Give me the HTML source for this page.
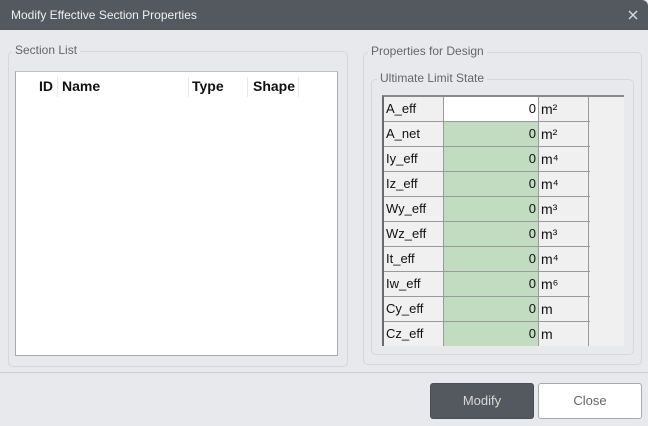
<!DOCTYPE html>
<html><head><style>
*{box-sizing:border-box;margin:0;padding:0}
body{width:648px;height:426px;background:#e8e9ed;font-family:"Liberation Sans",sans-serif;position:relative;overflow:hidden}
.title{position:absolute;left:0;top:0;width:648px;height:30px;background:#545960;color:#f0f0f0;font-size:12px;line-height:30px;padding-left:11px;border-radius:0 6px 0 0}
.x{position:absolute;right:10px;top:10px;width:10px;height:10px}
.grp{position:absolute;border:1px solid #d6d7db;border-radius:5px}
.lbl{position:absolute;background:#e8e9ed;color:#666;font-size:12px;padding:0 3px}
.list{position:absolute;left:15px;top:71px;width:323px;height:285px;background:#fff;border:1px solid #a8a9ad;border-top-color:#c0c0c0}
.h{position:absolute;top:6px;font-size:14px;font-weight:bold;color:#111;height:20px;line-height:16px}
.tbl{position:absolute;left:382px;top:95px;width:242px;height:251px;background:#f0f0f0;border-top:2px solid #8a8a8a;border-left:2px solid #6a6a6a;overflow:hidden}
.row{position:absolute;left:0;height:25px;width:206px;border-bottom:1px solid #9a9a9a;font-size:13px;color:#111}
.row div{position:absolute;top:0;height:24px;line-height:24px}
.c1{left:0;width:60px;padding-left:2px;border-right:1px solid #9a9a9a}
.c2{left:60px;width:95px;background:#c2dcc2;text-align:right;padding-right:2px;border-right:1px solid #9a9a9a}
.c3{left:155px;width:50px;padding-left:2px;border-right:1px solid #9a9a9a;font-size:14px}
.btn{position:absolute;top:383px;height:36px;width:104px;font-size:13px;text-align:center;line-height:34px;border-radius:3px}
</style></head><body>
<div class="title">Modify Effective Section Properties<svg class="x" viewBox="0 0 10 10"><path d="M1 1L9 9M9 1L1 9" stroke="#dcdcdc" stroke-width="1.4"/></svg></div>
<div class="grp" style="left:8px;top:51px;width:340px;height:316px"></div>
<div class="lbl" style="left:12px;top:43px">Section List</div>
<div class="list">
<div class="h" style="left:23px">ID</div>
<div style="position:absolute;left:41px;top:5px;width:1px;height:20px;background:#e8e8e8"></div>
<div class="h" style="left:46px">Name</div>
<div style="position:absolute;left:172px;top:5px;width:1px;height:20px;background:#e8e8e8"></div>
<div class="h" style="left:176px">Type</div>
<div style="position:absolute;left:231px;top:5px;width:1px;height:20px;background:#e8e8e8"></div>
<div class="h" style="left:237px">Shape</div>
<div style="position:absolute;left:282px;top:5px;width:1px;height:20px;background:#e8e8e8"></div>
</div>
<div class="grp" style="left:363px;top:52px;width:279px;height:313px"></div>
<div class="lbl" style="left:368px;top:44px">Properties for Design</div>
<div class="grp" style="left:371px;top:79px;width:263px;height:276px"></div>
<div class="lbl" style="left:377px;top:71px">Ultimate Limit State</div>
<div class="tbl">
<div class="row" style="top:0"><div class="c1">A_eff</div><div class="c2" style="background:#fff">0</div><div class="c3">m²</div></div>
<div class="row" style="top:25px"><div class="c1">A_net</div><div class="c2">0</div><div class="c3">m²</div></div>
<div class="row" style="top:50px"><div class="c1">Iy_eff</div><div class="c2">0</div><div class="c3">m⁴</div></div>
<div class="row" style="top:75px"><div class="c1">Iz_eff</div><div class="c2">0</div><div class="c3">m⁴</div></div>
<div class="row" style="top:100px"><div class="c1">Wy_eff</div><div class="c2">0</div><div class="c3">m³</div></div>
<div class="row" style="top:125px"><div class="c1">Wz_eff</div><div class="c2">0</div><div class="c3">m³</div></div>
<div class="row" style="top:150px"><div class="c1">It_eff</div><div class="c2">0</div><div class="c3">m⁴</div></div>
<div class="row" style="top:175px"><div class="c1">Iw_eff</div><div class="c2">0</div><div class="c3">m⁶</div></div>
<div class="row" style="top:200px"><div class="c1">Cy_eff</div><div class="c2">0</div><div class="c3">m</div></div>
<div class="row" style="top:225px"><div class="c1">Cz_eff</div><div class="c2">0</div><div class="c3">m</div></div>
</div>
<div style="position:absolute;left:0;top:372px;width:648px;height:1px;background:#cdced2"></div>
<div class="btn" style="left:430px;background:#545960;color:#d8d8d8;border:1px solid #4a4f55">Modify</div>
<div class="btn" style="left:538px;background:#fff;color:#666;border:1px solid #a8a9ad">Close</div>
</body></html>
